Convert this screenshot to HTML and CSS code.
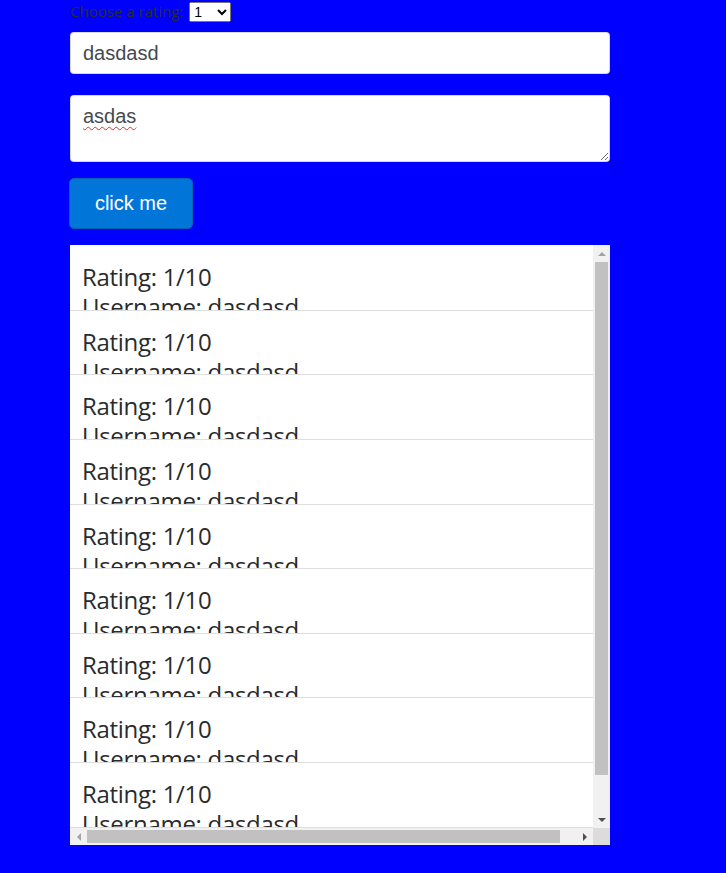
FILE: index.html
```
<!DOCTYPE html>
<html>
	<head>
		<title>Ratings</title>
		<link rel="stylesheet" href="styles.css">
	</head>
	<body>
		<div class="page">
			<form class="review-form">
				<div class="rating-row">
					<label for="rating">Choose a rating:</label>
					<select id="rating" class="rating-select">
						<option>1</option>
						<option>2</option>
						<option>3</option>
						<option>4</option>
						<option>5</option>
						<option>6</option>
						<option>7</option>
						<option>8</option>
						<option>9</option>
						<option>10</option>
					</select>
				</div>
				<input class="form-control username" type="text" value="dasdasd">
				<textarea class="form-control comment" rows="2">asdas</textarea>
				<button class="btn-primary" type="button">click me</button>
			</form>

			<div class="review-box">
				<ul class="review-list">
					<li class="review">Rating: 1/10<br>Username: dasdasd<br>Comment: asdas</li>
					<li class="review">Rating: 1/10<br>Username: dasdasd<br>Comment: asdas</li>
					<li class="review">Rating: 1/10<br>Username: dasdasd<br>Comment: asdas</li>
					<li class="review">Rating: 1/10<br>Username: dasdasd<br>Comment: asdas</li>
					<li class="review">Rating: 1/10<br>Username: dasdasd<br>Comment: asdas</li>
					<li class="review">Rating: 1/10<br>Username: dasdasd<br>Comment: asdas</li>
					<li class="review">Rating: 1/10<br>Username: dasdasd<br>Comment: asdas</li>
					<li class="review">Rating: 1/10<br>Username: dasdasd<br>Comment: asdas</li>
					<li class="review">Rating: 1/10<br>Username: dasdasd<br>Comment: asdas</li>
					<li class="review">Rating: 1/10<br>Username: dasdasd<br>Comment: asdas</li>
				</ul>

				<!-- scrollbars drawn by hand, the native ones are hidden -->
				<div class="scrollbar vertical">
					<span class="arrow">
						<svg width="8" height="4" viewBox="0 0 8 4"><polygon points="0,4 4,0 8,4" fill="#a3a3a3"/></svg>
					</span>
					<div class="track"><div class="thumb"></div></div>
					<span class="arrow">
						<svg width="8" height="4" viewBox="0 0 8 4"><polygon points="0,0 8,0 4,4" fill="#505050"/></svg>
					</span>
				</div>
				<div class="scrollbar horizontal">
					<span class="arrow">
						<svg width="4" height="8" viewBox="0 0 4 8"><polygon points="4,0 4,8 0,4" fill="#a3a3a3"/></svg>
					</span>
					<div class="track"><div class="thumb"></div></div>
					<span class="arrow">
						<svg width="4" height="8" viewBox="0 0 4 8"><polygon points="0,0 4,4 0,8" fill="#505050"/></svg>
					</span>
				</div>
				<div class="corner"></div>
			</div>
		</div>
	</body>
</html>
```

FILE: styles.css
```
body {
	margin: 0;
	background: #0000ff;
	color: #292b2c;
	font-family: "Open Sans", sans-serif;
}

.page {
	width: 540px;
	margin-left: 70px;
}

.review-form {
	display: flex;
	flex-direction: column;
	align-items: flex-start;
}

.rating-row {
	height: 22px;
	display: flex;
	align-items: center;
	gap: 6px;
	font-size: 15px;
}

.rating-select {
	width: 42px;
	height: 20px;
	font-family: "Liberation Sans", sans-serif;
	font-size: 14px;
	margin-top: 2px;
}

.form-control {
	display: block;
	box-sizing: border-box;
	width: 540px;
	padding: 8px 12px;
	font-family: "Liberation Sans", Arial, sans-serif;
	font-size: 20px;
	line-height: 1.25;
	color: #464a4c;
	background: #fff;
	border: 1px solid rgba(0, 0, 0, .15);
	border-radius: 4px;
}

.username {
	height: 42px;
	margin-top: 10px;
}

.comment {
	height: 67px;
	margin-top: 21px;
	resize: vertical;
	text-decoration: underline wavy #e0322d 1px;
	text-underline-offset: 3px;
}

.btn-primary {
	margin-top: 16px;
	margin-left: -1px;
	width: 124px;
	height: 51px;
	padding: 12px 24px;
	font-family: "Liberation Sans", Arial, sans-serif;
	font-size: 20px;
	line-height: 1.25;
	color: #fff;
	background: #0275d8;
	border: 1px solid #0262b8;
	border-radius: 5px;
}

.review-box {
	margin-top: 16px;
	height: 600px;
	display: grid;
	grid-template-columns: 1fr 17px;
	grid-template-rows: 1fr 17px;
	background: #fff;
}

.review-list {
	list-style: none;
	margin: 0;
	padding: 1px 0 0;
	overflow: hidden;
	min-width: 0;
}

.review {
	height: 47.625px;
	padding: 16px 6px 0 12px;
	overflow: hidden;
	font-size: 24px;
	line-height: 30px;
	letter-spacing: -0.3px;
	color: #292b2c;
	border-bottom: 1px solid #dedede;
}

.scrollbar {
	display: flex;
	background: #f1f1f1;
}

.scrollbar.vertical {
	flex-direction: column;
}

.scrollbar .arrow {
	flex: 0 0 17px;
	width: 17px;
	height: 17px;
	display: flex;
	align-items: center;
	justify-content: center;
}

.scrollbar .track {
	flex: 1;
	display: flex;
}

.vertical .track {
	flex-direction: column;
	padding: 0 2px;
}

.vertical .thumb {
	height: 513px;
	background: #c1c1c1;
}

.horizontal .track {
	padding: 2px 0;
}

.horizontal .thumb {
	width: 473px;
	background: #c1c1c1;
}

.corner {
	background: #dcdcdc;
}
```
